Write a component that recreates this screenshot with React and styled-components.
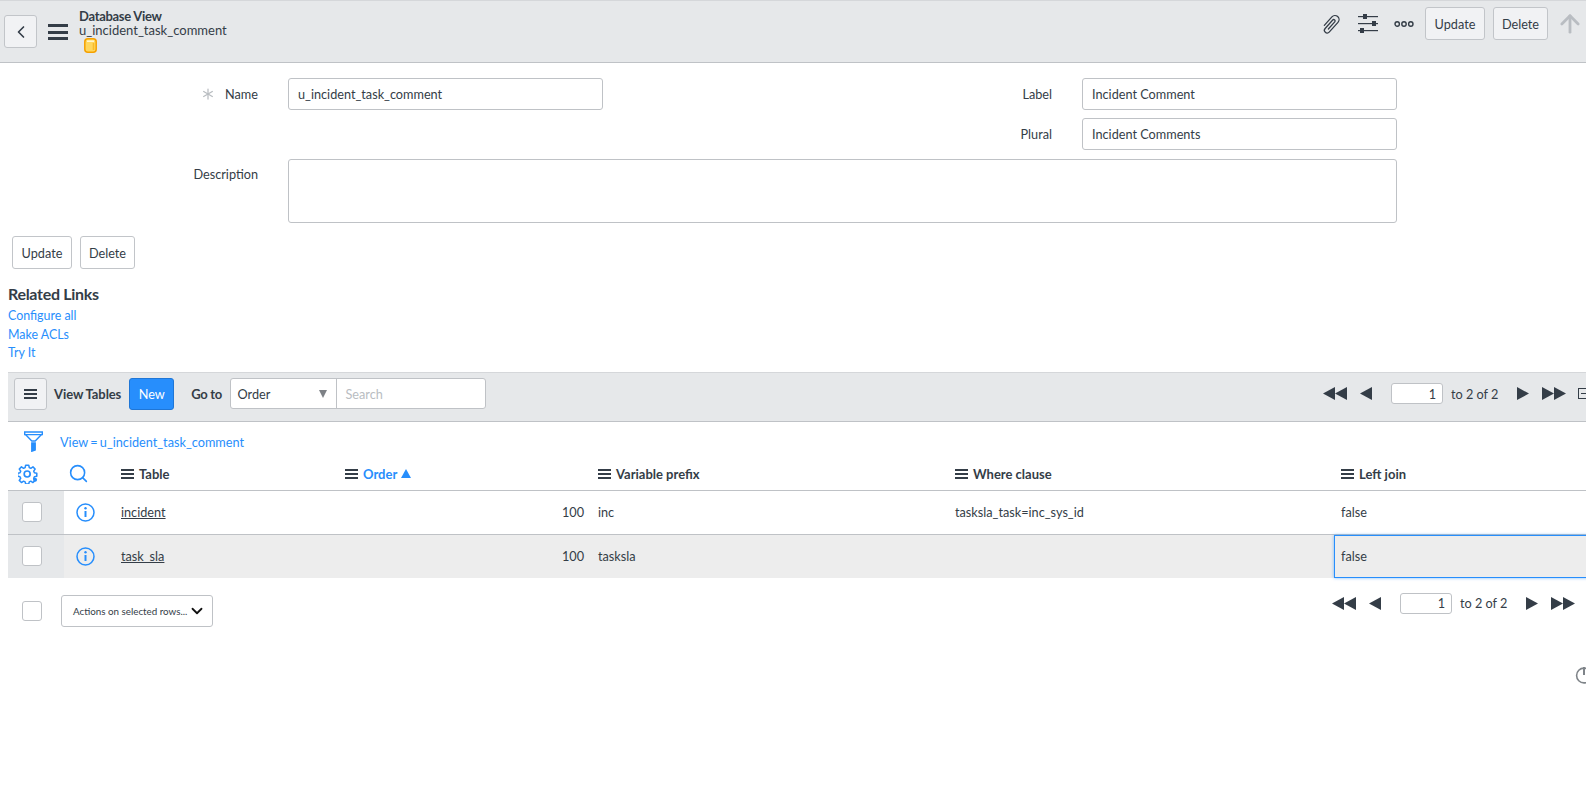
import React from 'react'
import styled, { createGlobalStyle } from 'styled-components'
import { ArrowUp, Asterisk, ChevronDown, ChevronLeft, Search } from 'lucide-react'

const INK = '#343d47'
const BLUE = '#278efc'

const GlobalStyle = createGlobalStyle`
    html, body {
        margin: 0;
        height: 788px;
        overflow: hidden;
        background: #fff;
    }
    body {
        font-family: "Lato", "Liberation Sans", sans-serif;
        font-size: 12.7px;
        color: ${INK};
    }
    * { box-sizing: border-box; }
`

const Burger = ({ size = 14, thick = 2 }) => (
    <BurgerBox $size={size} $thick={thick}><i /><i /><i /></BurgerBox>
)

const DatabaseIcon = () => (
    <svg width="13" height="15" viewBox="0 0 13 15">
        <rect x="0.8" y="0.8" width="11.4" height="13.4" rx="3" fill="#ffd75e" stroke="#f5a100" strokeWidth="1.5" />
        <path d="M3 3.2h7" stroke="#fff6cf" strokeWidth="1.6" />
        <path d="M9.5 5v7" stroke="#f7bc2c" strokeWidth="1.6" />
    </svg>
)

const ClipIcon = () => (
    <svg width="24" height="24" viewBox="0 0 22 24" fill="none" stroke={INK} strokeWidth="1.4" strokeLinecap="round">
        <g transform="rotate(42 11 12)">
            <path d="M6.5 18V5.5a4.5 4.5 0 0 1 9 0V20a3 3 0 0 1-6 0V7.5a1.5 1.5 0 0 1 3 0V18" />
        </g>
    </svg>
)

const SlidersIcon = () => (
    <svg width="20" height="21" viewBox="0 0 20 21" fill={INK}>
        <rect x="0" y="3" width="20" height="1.2" />
        <rect x="0" y="10" width="20" height="1.2" />
        <rect x="0" y="17" width="20" height="1.2" />
        <rect x="5" y="1" width="4" height="5" />
        <rect x="14" y="8" width="4" height="5" />
        <rect x="2" y="15" width="4" height="5" />
    </svg>
)

const DotsIcon = () => (
    <svg width="20" height="8" viewBox="0 0 20 8" fill="none" stroke={INK} strokeWidth="1.4">
        <circle cx="3.2" cy="4" r="2.2" />
        <circle cx="10" cy="4" r="2.2" />
        <circle cx="16.8" cy="4" r="2.2" />
    </svg>
)

const FunnelIcon = () => (
    <svg width="19" height="21" viewBox="0 0 19 21" fill="none" stroke={BLUE} strokeWidth="1.4">
        <path d="M0.7 1h17.6v2.6H0.7z" />
        <path d="M1.5 3.6l6.3 6.4h3.4l6.3-6.4" />
        <path d="M7.8 12h3.4v7l-3.4 1.2z" fill={BLUE} />
    </svg>
)

const GearIcon = () => (
    <svg width="20" height="20" viewBox="0 0 24 24" fill="none" stroke={BLUE} strokeWidth="2" strokeLinejoin="round">
        <path d="M10 1.5h4l.7 3.2 2 .9 2.8-1.8 2.8 2.8-1.8 2.8.9 2 3.1.7v3.8l-3.1.7-.9 2 1.8 2.8-2.8 2.8-2.8-1.8-2 .9-.7 2.7h-4l-.7-2.7-2-.9-2.8 1.8-2.8-2.8 1.8-2.8-.9-2-3.1-.7v-3.8l3.1-.7.9-2-1.8-2.8 2.8-2.8 2.8 1.8 2-.9z" transform="scale(.92)" />
        <circle cx="11" cy="12" r="3.6" />
        <circle cx="20.5" cy="19" r="2.4" fill={BLUE} stroke="none" />
    </svg>
)

const InfoIcon = () => (
    <svg width="19" height="19" viewBox="0 0 19 19" fill="none" stroke={BLUE}>
        <circle cx="9.5" cy="9.5" r="8.5" strokeWidth="1.5" />
        <path d="M9.5 8v6" strokeWidth="2" />
        <circle cx="9.5" cy="5.2" r="1.2" fill={BLUE} stroke="none" />
    </svg>
)

const PowerIcon = () => (
    <svg width="18" height="18" viewBox="0 0 18 18" fill="none" stroke="#7f8489" strokeWidth="1.6">
        <circle cx="9" cy="9.5" r="7.4" />
        <path d="M9 1v8" strokeWidth="2" />
    </svg>
)

const Triangle = ({ dir }) => (
    <svg width="12" height="13" viewBox="0 0 12 13" fill={INK}>
        <path d={dir === 'left' ? 'M0 6.5L12 0v13z' : 'M12 6.5L0 0v13z'} />
    </svg>
)

const Pager = () => (
    <PagerWrap>
        <TriPair><Triangle dir="left" /><Triangle dir="left" /></TriPair>
        <TriSingle><Triangle dir="left" /></TriSingle>
        <PageInput>1</PageInput>
        <PageText>to 2 of 2</PageText>
        <TriNext><Triangle dir="right" /></TriNext>
        <TriPair><Triangle dir="right" /><Triangle dir="right" /></TriPair>
    </PagerWrap>
)

const columns = [
    { name: 'Table', width: 224 },
    { name: 'Order', width: 253, sorted: true },
    { name: 'Variable prefix', width: 357 },
    { name: 'Where clause', width: 386 },
    { name: 'Left join', width: 252 },
]

const rows = [
    { table: 'incident', order: 100, prefix: 'inc', where: 'tasksla_task=inc_sys_id', join: 'false' },
    { table: 'task_sla', order: 100, prefix: 'tasksla', where: '', join: 'false', active: true },
]

export default function App() {
    return (
        <>
            <GlobalStyle />
            <Header>
                <BackBtn><ChevronLeft size={20} strokeWidth={2} /></BackBtn>
                <HeaderBurger><Burger size={20} thick={3} /></HeaderBurger>
                <TitleBlock>
                    <Title>Database View</Title>
                    <Subtitle>u_incident_task_comment</Subtitle>
                    <DbSlot><DatabaseIcon /></DbSlot>
                </TitleBlock>
                <HeaderTools>
                    <ToolSlot $w={20} $gap={17}><ClipIcon /></ToolSlot>
                    <ToolSlot $w={20} $gap={16}><SlidersIcon /></ToolSlot>
                    <ToolSlot $w={20} $gap={11}><DotsIcon /></ToolSlot>
                    <HeadBtn $w={60}>Update</HeadBtn>
                    <HeadBtn $w={55}>Delete</HeadBtn>
                    <UpSlot><ArrowUp size={28} color="#b9bdc2" strokeWidth={2.4} /></UpSlot>
                </HeaderTools>
            </Header>

            <FormGrid>
                <FieldLabel><Asterisk size={20} color="#b8bcc0" strokeWidth={1.5} />Name</FieldLabel>
                <TextField>u_incident_task_comment</TextField>
                <FieldLabel>Label</FieldLabel>
                <TextField>Incident Comment</TextField>
                <Spacer />
                <Spacer />
                <FieldLabel>Plural</FieldLabel>
                <TextField>Incident Comments</TextField>
                <FieldLabel>Description</FieldLabel>
                <TextArea />
            </FormGrid>

            <FormButtons>
                <PlainBtn $w={60}>Update</PlainBtn>
                <PlainBtn $w={55}>Delete</PlainBtn>
            </FormButtons>

            <Related>
                <RelatedTitle>Related Links</RelatedTitle>
                <RelatedLink>Configure all</RelatedLink>
                <RelatedLink>Make ACLs</RelatedLink>
                <RelatedLink>Try It</RelatedLink>
            </Related>

            <ListSection>
                <ListBar>
                    <ListMenuBtn><Burger size={13} thick={2} /></ListMenuBtn>
                    <ListTitle>View Tables</ListTitle>
                    <NewBtn>New</NewBtn>
                    <GoTo>Go to</GoTo>
                    <SearchGroup>
                        <SelectPart>Order<Caret /></SelectPart>
                        <SearchPart>Search</SearchPart>
                    </SearchGroup>
                    <BarRight>
                        <Pager />
                        <MinusBox />
                    </BarRight>
                </ListBar>

                <FilterRow>
                    <FunnelSlot><FunnelIcon /></FunnelSlot>
                    <FilterText>View = u_incident_task_comment</FilterText>
                </FilterRow>

                <HeadRow>
                    <GearCell><GearIcon /></GearCell>
                    <SearchCell><Search size={21} color={BLUE} strokeWidth={1.8} /></SearchCell>
                    {columns.map(col => (
                        <HeadCell key={col.name} $w={col.width} $sorted={col.sorted}>
                            <Burger size={13} thick={2} />
                            {col.name}
                            {col.sorted && <SortUp />}
                        </HeadCell>
                    ))}
                </HeadRow>

                {rows.map(row => (
                    <Row key={row.table} $active={row.active}>
                        <CheckCell><CheckBox /></CheckCell>
                        <InfoCell><InfoIcon /></InfoCell>
                        <Cell $w={224}><TableLink>{row.table}</TableLink></Cell>
                        <Cell $w={253} $right>{row.order}</Cell>
                        <Cell $w={357}>{row.prefix}</Cell>
                        <Cell $w={386}>{row.where}</Cell>
                        <Cell $w={row.active ? 258 : 252} $selected={row.active}>{row.join}</Cell>
                    </Row>
                ))}

                <Footer>
                    <FooterCheck><CheckBox /></FooterCheck>
                    <ActionSelect>Actions on selected rows...<ChevronDown size={18} color="#111" strokeWidth={2.4} /></ActionSelect>
                    <FooterPager><Pager /></FooterPager>
                </Footer>
            </ListSection>

            <PowerRow><PowerIcon /></PowerRow>
        </>
    )
}

const BurgerBox = styled.span`
    display: inline-flex;
    flex-direction: column;
    justify-content: space-between;
    flex: none;
    width: ${props => props.$size}px;
    height: ${props => Math.round(props.$size * 0.8)}px;
    i {
        display: block;
        height: ${props => props.$thick}px;
        background: ${INK};
    }
`

const Header = styled.header`
    display: flex;
    height: 63px;
    background: #e6e8ea;
    border-top: 1px solid #d5d7da;
    border-bottom: 1px solid #bfc2c6;
`

const BackBtn = styled.div`
    width: 33px;
    height: 33px;
    margin: 14px 0 0 4px;
    display: flex;
    align-items: center;
    justify-content: center;
    background: #f1f2f4;
    border: 1px solid #c2c5c9;
    border-radius: 3px;
    color: ${INK};
`

const HeaderBurger = styled.div`
    margin: 23px 0 0 11px;
    display: flex;
`

const TitleBlock = styled.div`
    margin: 8px 0 0 11px;
    display: flex;
    flex-direction: column;
`

const Title = styled.div`
    font-weight: 700;
    font-size: 13px;
    line-height: 15px;
    letter-spacing: -0.3px;
`

const Subtitle = styled.div`
    margin-top: -1px;
    font-size: 13px;
    line-height: 15px;
`

const DbSlot = styled.div`
    margin: 0 0 0 5px;
    display: flex;
    height: 15px;
`

const HeaderTools = styled.div`
    margin-left: auto;
    display: flex;
    align-items: flex-start;
    padding-top: 6px;
`

const ToolSlot = styled.div`
    width: ${props => props.$w}px;
    height: 33px;
    margin-right: ${props => props.$gap}px;
    display: flex;
    align-items: center;
    justify-content: center;
`

const HeadBtn = styled.div`
    width: ${props => props.$w}px;
    height: 33px;
    margin-right: 8px;
    display: flex;
    align-items: center;
    justify-content: center;
    background: #f1f2f4;
    border: 1px solid #c2c5c9;
    border-radius: 3px;
`

const UpSlot = styled.div`
    width: 30px;
    height: 33px;
    display: flex;
    align-items: center;
`

const FormGrid = styled.div`
    display: grid;
    grid-template-columns: 258px 315px 419px 315px;
    grid-auto-rows: 32px;
    column-gap: 30px;
    row-gap: 8px;
    padding-top: 15px;
`

const FieldLabel = styled.div`
    display: flex;
    align-items: center;
    justify-content: flex-end;
    gap: 7px;
    height: 32px;
`

const TextField = styled.div`
    height: 32px;
    padding: 0 9px;
    display: flex;
    align-items: center;
    background: #fff;
    border: 1px solid #bfc2c6;
    border-radius: 3px;
`

const Spacer = styled.div``

const TextArea = styled.div`
    grid-column: 2 / 5;
    height: 64px;
    margin-top: 1px;
    background: #fff;
    border: 1px solid #bfc2c6;
    border-radius: 3px;
`

const FormButtons = styled.div`
    display: flex;
    gap: 8px;
    margin: 46px 0 0 12px;
`

const PlainBtn = styled.div`
    width: ${props => props.$w}px;
    height: 33px;
    display: flex;
    align-items: center;
    justify-content: center;
    background: #fff;
    border: 1px solid #c2c5c9;
    border-radius: 3px;
`

const Related = styled.div`
    margin: 15px 0 0 8px;
    display: flex;
    flex-direction: column;
`

const RelatedTitle = styled.div`
    font-size: 16px;
    font-weight: 700;
    line-height: 20px;
    letter-spacing: -0.3px;
    margin-bottom: 3px;
`

const RelatedLink = styled.div`
    font-size: 12.4px;
    line-height: 18.5px;
    color: ${BLUE};
`

const ListSection = styled.section`
    margin: 9px 0 0 8px;
`

const ListBar = styled.div`
    display: flex;
    align-items: center;
    height: 50px;
    padding: 0 0 6px 6px;
    background: #e6e8ea;
    border-top: 1px solid #d5d7da;
    border-bottom: 1px solid #bfc2c6;
`

const ListMenuBtn = styled.div`
    width: 33px;
    height: 32px;
    display: flex;
    align-items: center;
    justify-content: center;
    background: #f1f2f4;
    border: 1px solid #c2c5c9;
    border-radius: 3px;
`

const ListTitle = styled.div`
    margin-left: 7px;
    font-weight: 700;
    font-size: 13px;
    letter-spacing: -0.1px;
`

const NewBtn = styled.div`
    width: 45px;
    height: 32px;
    margin-left: 8px;
    display: flex;
    align-items: center;
    justify-content: center;
    color: #fff;
    background: ${BLUE};
    border: 1px solid #1f76d6;
    border-radius: 3px;
`

const GoTo = styled.div`
    margin-left: 17px;
    font-weight: 700;
    font-size: 13px;
    letter-spacing: -0.3px;
`

const SearchGroup = styled.div`
    display: flex;
    width: 256px;
    height: 31px;
    margin-left: 7.5px;
    background: #fff;
    border: 1px solid #bfc2c6;
    border-radius: 3px;
`

const SelectPart = styled.div`
    width: 106px;
    padding: 0 7px;
    display: flex;
    align-items: center;
    justify-content: space-between;
    border-right: 1px solid #bfc2c6;
`

const Caret = styled.span`
    width: 0;
    height: 0;
    border-left: 4.5px solid transparent;
    border-right: 4.5px solid transparent;
    border-top: 8px solid #7d8186;
    margin-right: 2px;
`

const SearchPart = styled.div`
    padding-left: 9px;
    display: flex;
    align-items: center;
    color: #b9bdc2;
`

const BarRight = styled.div`
    margin-left: auto;
    display: flex;
    align-items: center;
    margin-right: -6px;
`

const MinusBox = styled.div`
    position: relative;
    width: 14px;
    height: 11px;
    margin-left: 12px;
    border: 1px solid ${INK};
    &::after {
        content: "";
        position: absolute;
        left: 2px;
        top: 4px;
        width: 6px;
        height: 1px;
        background: ${INK};
    }
`

const PagerWrap = styled.div`
    display: flex;
    align-items: center;
`

const TriPair = styled.div`
    display: flex;
    width: 24px;
    justify-content: space-between;
`

const TriSingle = styled.div`
    display: flex;
    margin: 0 19px 0 13px;
`

const TriNext = styled.div`
    display: flex;
    margin: 0 13px 0 20px;
`

const PageInput = styled.div`
    width: 52px;
    height: 21px;
    padding-right: 6px;
    display: flex;
    align-items: center;
    justify-content: flex-end;
    background: #fff;
    border: 1px solid #bfc2c6;
    border-radius: 3px;
`

const PageText = styled.div`
    width: 46px;
    margin-left: 8px;
    white-space: nowrap;
`

const FilterRow = styled.div`
    display: flex;
    align-items: center;
    height: 38px;
    padding-top: 2px;
`

const FunnelSlot = styled.div`
    display: flex;
    margin-left: 16px;
    width: 36px;
`

const FilterText = styled.div`
    word-spacing: -1px;
    color: ${BLUE};
`

const HeadRow = styled.div`
    display: flex;
    align-items: center;
    height: 31px;
    padding-bottom: 2px;
    border-bottom: 1px solid #bfc2c6;
`

const GearCell = styled.div`
    width: 56px;
    padding-left: 10px;
    display: flex;
`

const SearchCell = styled.div`
    width: 50px;
    padding-left: 4px;
    display: flex;
`

const HeadCell = styled.div`
    width: ${props => props.$w}px;
    flex: none;
    padding-left: 7px;
    display: flex;
    align-items: center;
    gap: 5px;
    font-weight: 700;
    font-size: 13px;
    color: ${props => (props.$sorted ? BLUE : INK)};
`

const SortUp = styled.span`
    width: 0;
    height: 0;
    margin-left: -1px;
    border-left: 5.5px solid transparent;
    border-right: 5.5px solid transparent;
    border-bottom: 9px solid ${BLUE};
`

const Row = styled.div`
    display: flex;
    align-items: stretch;
    height: ${props => (props.$active ? 43 : 44)}px;
    background: ${props => (props.$active ? '#ededed' : '#fff')};
    border-bottom: ${props => (props.$active ? 'none' : '1px solid #bfc2c6')};
`

const CheckCell = styled.div`
    width: 56px;
    flex: none;
    display: flex;
    align-items: center;
    padding-left: 14px;
    background: #e6e8ea;
`

const CheckBox = styled.div`
    width: 20px;
    height: 20px;
    background: #fff;
    border: 1px solid #bfc2c6;
    border-radius: 3px;
`

const InfoCell = styled.div`
    width: 50px;
    flex: none;
    display: flex;
    align-items: center;
    padding-left: 12px;
`

const Cell = styled.div`
    width: ${props => props.$w}px;
    flex: none;
    display: flex;
    align-items: center;
    justify-content: ${props => (props.$right ? 'flex-end' : 'flex-start')};
    padding: 0 7px;
    ${props => props.$selected && `
        border: 1px solid ${BLUE};
        box-shadow: 0 0 3px rgba(39, 142, 252, 0.6);
        padding-left: 6px;
    `}
`

const TableLink = styled.span`
    text-decoration: underline;
`

const Footer = styled.div`
    display: flex;
    align-items: flex-start;
    height: 60px;
`

const FooterCheck = styled.div`
    margin: 23px 0 0 14px;
    display: flex;
`

const ActionSelect = styled.div`
    width: 152px;
    height: 32px;
    margin: 17px 0 0 19px;
    padding: 0 6px 0 11px;
    display: flex;
    align-items: center;
    justify-content: space-between;
    font-size: 9.8px;
    white-space: nowrap;
    background: #fff;
    border: 1px solid #bfc2c6;
    border-radius: 3px;
`

const FooterPager = styled.div`
    margin: 15px 11px 0 auto;
`

const PowerRow = styled.div`
    display: flex;
    justify-content: flex-end;
    margin: 28px -7px 0 0;
`
